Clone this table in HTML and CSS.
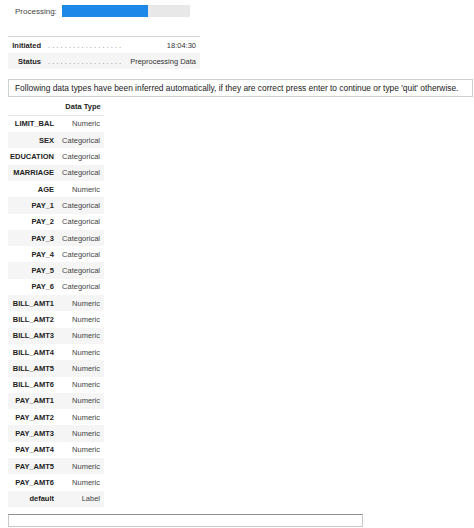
FILE: index.html
```html
<!DOCTYPE html>
<html>
<head>
<meta charset="utf-8">
<link rel="stylesheet" href="styles.css">
</head>
<body>
<div class="progress-row">
  <span class="progress-label">Processing:</span>
  <div class="bar"><div class="bar-fill" style="width:67%"></div></div>
</div>

<table class="info">
  <tr><th>Initiated</th><td class="dots">..................</td><td class="val">18:04:30</td></tr>
  <tr class="shaded"><th>Status</th><td class="dots">..................</td><td class="val">Preprocessing Data</td></tr>
</table>

<div class="message">Following data types have been inferred automatically, if they are correct press enter to continue or type 'quit' otherwise.</div>

<table class="dtypes">
  <thead><tr><th></th><th class="head">Data Type</th></tr></thead>
  <tbody>
    <tr><th>LIMIT_BAL</th><td>Numeric</td></tr>
    <tr><th>SEX</th><td>Categorical</td></tr>
    <tr><th>EDUCATION</th><td>Categorical</td></tr>
    <tr><th>MARRIAGE</th><td>Categorical</td></tr>
    <tr><th>AGE</th><td>Numeric</td></tr>
    <tr><th>PAY_1</th><td>Categorical</td></tr>
    <tr><th>PAY_2</th><td>Categorical</td></tr>
    <tr><th>PAY_3</th><td>Categorical</td></tr>
    <tr><th>PAY_4</th><td>Categorical</td></tr>
    <tr><th>PAY_5</th><td>Categorical</td></tr>
    <tr><th>PAY_6</th><td>Categorical</td></tr>
    <tr><th>BILL_AMT1</th><td>Numeric</td></tr>
    <tr><th>BILL_AMT2</th><td>Numeric</td></tr>
    <tr><th>BILL_AMT3</th><td>Numeric</td></tr>
    <tr><th>BILL_AMT4</th><td>Numeric</td></tr>
    <tr><th>BILL_AMT5</th><td>Numeric</td></tr>
    <tr><th>BILL_AMT6</th><td>Numeric</td></tr>
    <tr><th>PAY_AMT1</th><td>Numeric</td></tr>
    <tr><th>PAY_AMT2</th><td>Numeric</td></tr>
    <tr><th>PAY_AMT3</th><td>Numeric</td></tr>
    <tr><th>PAY_AMT4</th><td>Numeric</td></tr>
    <tr><th>PAY_AMT5</th><td>Numeric</td></tr>
    <tr><th>PAY_AMT6</th><td>Numeric</td></tr>
    <tr><th>default</th><td>Label</td></tr>
  </tbody>
</table>

<input class="prompt" type="text">
</body>
</html>
```

FILE: styles.css
```css
html, body {
  margin: 0;
  padding: 0;
  background: #fff;
}
body {
  padding: 0 8px;
  font-family: "Liberation Sans", Arial, sans-serif;
  font-size: 7.5px;
  color: #333;
}
.progress-row {
  display: flex;
  align-items: center;
  padding-top: 5px;
  height: 12px;
}
.progress-label {
  margin-left: 7px;
  width: 42px;
  color: #444;
  font-size: 8px;
}
.bar {
  margin-left: 5px;
  width: 128px;
  height: 12px;
  background: #e8e8e8;
}
.bar-fill {
  height: 100%;
  background: #1e88e8;
}
.info {
  margin-top: 19px;
  width: 192px;
  border-collapse: collapse;
  border-top: 1px solid #d4d4d4;
}
.info tr {
  height: 16px;
}
.info th {
  width: 33px;
  text-align: right;
  font-weight: bold;
  color: #222;
  padding: 1px 0 0 0;
}
.info .dots {
  color: #777;
  letter-spacing: 2.1px;
  padding: 1px 0 0 7px;
  white-space: nowrap;
}
.info .val {
  text-align: right;
  padding: 1px 4px 0 0;
  color: #333;
  white-space: nowrap;
}
.shaded {
  background: #f5f5f5;
}
.message {
  margin-top: 10px;
  margin-right: -7px;
  height: 16px;
  line-height: 16px;
  border: 1px solid #cfcfcf;
  padding-left: 6px;
  color: #222;
  font-size: 8.4px;
  white-space: nowrap;
  overflow: hidden;
}
.dtypes {
  margin-top: 2px;
  border-collapse: collapse;
  width: 96px;
}
.dtypes th, .dtypes td {
  height: 16.3px;
  padding: 0 4px 0 0;
  text-align: right;
  white-space: nowrap;
}
.dtypes thead tr {
  border-bottom: 1px solid #e6e6e6;
}
.dtypes tbody th {
  width: 46px;
  font-weight: bold;
  color: #222;
}
.dtypes tbody td {
  color: #444;
}
.dtypes .head {
  font-weight: bold;
  color: #222;
  text-align: center;
  padding: 0 0 0 4px;
}
.dtypes tbody tr:nth-child(even) {
  background: #f5f5f5;
}
.prompt {
  display: block;
  margin-top: 7px;
  width: 355px;
  height: 13px;
  box-sizing: border-box;
  border: 1px solid #c8c8c8;
  border-top-color: #8e8e8e;
  padding: 0;
}
```
